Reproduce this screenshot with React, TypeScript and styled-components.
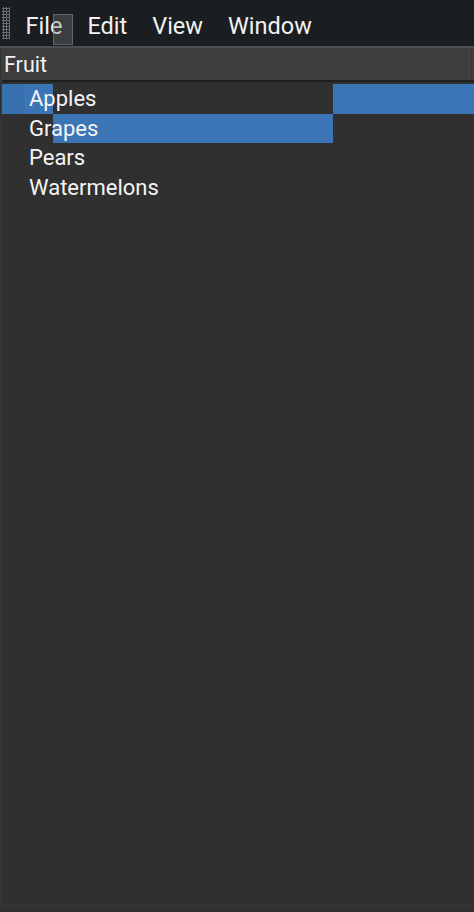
import styled, { createGlobalStyle } from "styled-components";

const GlobalStyle = createGlobalStyle`
  html, body {
    margin: 0;
    padding: 0;
    height: 100%;
    background: #303030;
  }
  #root {
    height: 100%;
  }
  * {
    box-sizing: border-box;
  }
`;

// which of the row's cells are painted with the selection colour
type Segment = [boolean, boolean, boolean];

const fruits: { name: string; selected: Segment }[] = [
  { name: "Apples", selected: [true, false, true] },
  { name: "Grapes", selected: [false, true, false] },
  { name: "Pears", selected: [false, false, false] },
  { name: "Watermelons", selected: [false, false, false] },
];

const App: React.FC = () => {
  return (
    <>
      <GlobalStyle />
      <Window>
        <MenuBar>
          <Grip />
          <MenuItem>
            File
            <HoverMark />
          </MenuItem>
          <MenuItem>Edit</MenuItem>
          <MenuItem>View</MenuItem>
          <MenuItem>Window</MenuItem>
        </MenuBar>
        <TreeView>
          <Header>
            <HeaderSection>Fruit</HeaderSection>
          </Header>
          <Rows>
            {fruits.map((fruit) => (
              <Row key={fruit.name}>
                <Cell $col={1} $selected={fruit.selected[0]} $shade />
                <Cell $col={2} $selected={fruit.selected[0]} />
                <Cell $col={3} $selected={fruit.selected[1]} />
                <Cell $col={4} $selected={fruit.selected[2]} />
                <Label>{fruit.name}</Label>
              </Row>
            ))}
          </Rows>
        </TreeView>
      </Window>
    </>
  );
};

const Window = styled.div`
  display: flex;
  flex-direction: column;
  height: 100%;
  font-family: Roboto, "Noto Sans", sans-serif;
  color: #f2f2f2;
`;

const MenuBar = styled.div`
  display: flex;
  align-items: stretch;
  height: 48px;
  padding-left: 2px;
  background: #1b1e21;
  border-bottom: 2px solid #4e5052;
`;

const Grip = styled.div`
  align-self: center;
  width: 8px;
  height: 32px;
  margin-right: 3px;
  background-image: radial-gradient(circle, #6b6e70 1px, transparent 1.2px);
  background-size: 3px 3px;
`;

const MenuItem = styled.div`
  position: relative;
  padding: 4px 12.5px 0;
  font-size: 23.5px;
  line-height: 44px;
`;

const HoverMark = styled.span`
  position: absolute;
  left: 40px;
  top: 14px;
  width: 20px;
  height: 31px;
  background: rgba(120, 120, 120, 0.35);
  border: 1px solid rgba(140, 140, 140, 0.5);
`;

const TreeView = styled.div`
  flex: 1;
  display: flex;
  flex-direction: column;
  margin-left: 1px;
  border-left: 1px solid #3c3c3c;
  border-bottom: 1px solid #3a3a3a;
  margin-bottom: 6px;
  background: #303030;
`;

const Header = styled.div`
  display: flex;
  height: 34px;
  background: #3d3d3d;
  border-bottom: 2px solid #1f1f1f;
`;

const HeaderSection = styled.div`
  flex: 1;
  padding-left: 2px;
  margin-right: 5px;
  font-size: 21.5px;
  line-height: 33px;
  border-right: 1px solid #4a4a4a;
`;

const Rows = styled.div`
  display: flex;
  flex-direction: column;
  padding-top: 2px;
`;

const Row = styled.div`
  display: grid;
  grid-template-columns: 23px 28px 280px 1fr;
  height: 29.5px;
`;

const Cell = styled.div<{ $col: number; $selected: boolean; $shade?: boolean }>`
  grid-row: 1;
  grid-column: ${({ $col }) => $col};
  background: ${({ $selected, $shade }) =>
    $selected ? ($shade ? "#3870b0" : "#3b75b6") : "transparent"};
`;

const Label = styled.div`
  grid-row: 1;
  grid-column: 1 / -1;
  padding-left: 27px;
  font-size: 22px;
  line-height: 29.5px;
  color: #f4f4f4;
`;

export default App;
